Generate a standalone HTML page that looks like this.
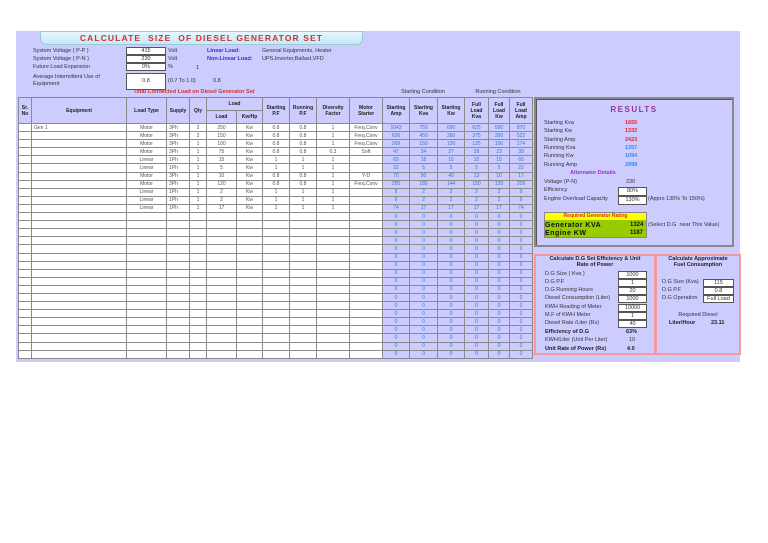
<!DOCTYPE html>
<html><head><meta charset="utf-8"><style>
*{margin:0;padding:0;box-sizing:border-box}
body{width:768px;height:543px;background:#fff;font-family:"Liberation Sans",sans-serif;font-size:5.5px;color:#333;position:relative;overflow:hidden}
.bg{position:absolute;left:16px;top:31px;width:724px;height:331px;background:#ccccff}
.a{position:absolute;white-space:nowrap;line-height:1}
.title{position:absolute;left:40px;top:31px;width:323px;height:14px;border-radius:0 0 6px 6px;background:linear-gradient(#e6f7ff,#c4e8f8);border:1px solid #9cc;color:#c33;font-weight:bold;font-size:8.5px;letter-spacing:1.1px;text-align:center;line-height:13px}
.box{position:absolute;background:#fff;border:1px solid #555;text-align:center;font-size:5.5px;line-height:6px}
table{position:absolute;left:18px;top:97px;border-collapse:collapse;table-layout:fixed}
td,th{border:1px solid #8a8a8a;height:8.1px;padding:0;font-size:5px;line-height:6px;text-align:center;color:#555;white-space:nowrap;overflow:hidden;background:#fff}
th{background:#ccccff;color:#222;font-weight:bold;height:13px}
td.s{background:#ccccff;color:#37c}
td.l{text-align:left;padding-left:2px}
.res{position:absolute;left:534px;top:97px;width:200px;height:150px;border:2px solid #888;box-shadow:inset 1px 1px 0 #555}
.pk{position:absolute;top:254px;height:101px;border:2px solid #f59a9a}
b{color:#222}
</style></head><body>
<div class="bg"></div>
<div class="title">CALCULATE &nbsp;SIZE &nbsp;OF DIESEL GENERATOR SET</div>

<div class="a" style="left:33px;top:49px">System Voltage ( P-P )</div>
<div class="a" style="left:33px;top:57px">System Voltage ( P-N )</div>
<div class="a" style="left:33px;top:65px">Future Load Expansion</div>
<div class="a" style="left:33px;top:75px">Average Intermittent Use of</div>
<div class="a" style="left:33px;top:82px">Equipment</div>
<div class="box" style="left:126px;top:47px;width:40px;height:8px">415</div>
<div class="box" style="left:126px;top:55px;width:40px;height:8px">230</div>
<div class="box" style="left:126px;top:63px;width:40px;height:8px">0%</div>
<div class="box" style="left:126px;top:73px;width:40px;height:17px;line-height:15px">0.8</div>
<div class="a" style="left:168px;top:49px">Volt</div>
<div class="a" style="left:168px;top:57px">Volt</div>
<div class="a" style="left:168px;top:65px">%</div>
<div class="a" style="left:196px;top:66px">1</div>
<div class="a" style="left:168px;top:79px">(0.7 To 1.0)</div>
<div class="a" style="left:213px;top:79px">0.8</div>
<div class="a" style="left:207px;top:49px;color:#33c;font-weight:bold">Linear Load:</div>
<div class="a" style="left:207px;top:57px;color:#33c;font-weight:bold">Non-Linear Load:</div>
<div class="a" style="left:262px;top:49px">General Equipments, Heater</div>
<div class="a" style="left:262px;top:57px">UPS,Inverter,Ballast,VFD</div>
<div class="a" style="left:126px;top:90px;width:136px;text-align:center;color:#c33;font-weight:bold">Total Connected Load on Diesel Generator Set</div>
<div class="a" style="left:382px;top:90px;width:82px;text-align:center">Starting Condition</div>
<div class="a" style="left:464px;top:90px;width:68px;text-align:center">Running Condition</div>

<table>
<colgroup><col style="width:13px"><col style="width:95px"><col style="width:40px"><col style="width:23px"><col style="width:17px"><col style="width:30px"><col style="width:26px"><col style="width:27px"><col style="width:27px"><col style="width:33px"><col style="width:33px"><col style="width:27px"><col style="width:28px"><col style="width:27px"><col style="width:24px"><col style="width:21px"><col style="width:23px"></colgroup>
<tr><th rowspan="2">Sr.<br>No</th><th rowspan="2">Equipment</th><th rowspan="2">Load Type</th><th rowspan="2">Supply</th><th rowspan="2">Qty</th><th colspan="2">Load</th><th rowspan="2">Starting<br>P.F</th><th rowspan="2">Running<br>P.F</th><th rowspan="2">Diversity<br>Factor</th><th rowspan="2">Motor<br>Starter</th><th rowspan="2">Starting<br>Amp</th><th rowspan="2">Starting<br>Kva</th><th rowspan="2">Starting<br>Kw</th><th rowspan="2">Full<br>Load<br>Kva</th><th rowspan="2">Full<br>Load<br>Kw</th><th rowspan="2">Full<br>Load<br>Amp</th></tr>
<tr><th>Load</th><th>Kw/Hp</th></tr>
<tr><td></td><td class="l">Gen 1</td><td>Motor</td><td class="l">3Ph</td><td>2</td><td>250</td><td>Kw</td><td>0.8</td><td>0.8</td><td>1</td><td>Freq.Conv</td><td class="s">1043</td><td class="s">750</td><td class="s">600</td><td class="s">625</td><td class="s">500</td><td class="s">870</td></tr>
<tr><td></td><td></td><td>Motor</td><td class="l">3Ph</td><td>2</td><td>150</td><td>Kw</td><td>0.8</td><td>0.8</td><td>1</td><td>Freq.Conv</td><td class="s">626</td><td class="s">450</td><td class="s">360</td><td class="s">375</td><td class="s">300</td><td class="s">522</td></tr>
<tr><td></td><td></td><td>Motor</td><td class="l">3Ph</td><td>1</td><td>100</td><td>Kw</td><td>0.8</td><td>0.8</td><td>1</td><td>Freq.Conv</td><td class="s">209</td><td class="s">150</td><td class="s">120</td><td class="s">125</td><td class="s">100</td><td class="s">174</td></tr>
<tr><td></td><td></td><td>Motor</td><td class="l">3Ph</td><td>1</td><td>75</td><td>Kw</td><td>0.8</td><td>0.8</td><td>0.3</td><td>Soft</td><td class="s">47</td><td class="s">34</td><td class="s">27</td><td class="s">28</td><td class="s">23</td><td class="s">39</td></tr>
<tr><td></td><td></td><td>Linear</td><td class="l">1Ph</td><td>1</td><td>15</td><td>Kw</td><td>1</td><td>1</td><td>1</td><td></td><td class="s">65</td><td class="s">15</td><td class="s">15</td><td class="s">15</td><td class="s">15</td><td class="s">65</td></tr>
<tr><td></td><td></td><td>Linear</td><td class="l">1Ph</td><td>1</td><td>5</td><td>Kw</td><td>1</td><td>1</td><td>1</td><td></td><td class="s">22</td><td class="s">5</td><td class="s">5</td><td class="s">5</td><td class="s">5</td><td class="s">22</td></tr>
<tr><td></td><td></td><td>Motor</td><td class="l">3Ph</td><td>1</td><td>10</td><td>Kw</td><td>0.8</td><td>0.8</td><td>1</td><td>Y-D</td><td class="s">70</td><td class="s">50</td><td class="s">40</td><td class="s">13</td><td class="s">10</td><td class="s">17</td></tr>
<tr><td></td><td></td><td>Motor</td><td class="l">3Ph</td><td>1</td><td>120</td><td>Kw</td><td>0.8</td><td>0.8</td><td>1</td><td>Freq.Conv</td><td class="s">250</td><td class="s">180</td><td class="s">144</td><td class="s">150</td><td class="s">120</td><td class="s">209</td></tr>
<tr><td></td><td></td><td>Linear</td><td class="l">1Ph</td><td>1</td><td>2</td><td>Kw</td><td>1</td><td>1</td><td>1</td><td></td><td class="s">9</td><td class="s">2</td><td class="s">2</td><td class="s">2</td><td class="s">2</td><td class="s">9</td></tr>
<tr><td></td><td></td><td>Linear</td><td class="l">1Ph</td><td>1</td><td>2</td><td>Kw</td><td>1</td><td>1</td><td>1</td><td></td><td class="s">9</td><td class="s">2</td><td class="s">2</td><td class="s">2</td><td class="s">2</td><td class="s">9</td></tr>
<tr><td></td><td></td><td>Linear</td><td class="l">1Ph</td><td>1</td><td>17</td><td>Kw</td><td>1</td><td>1</td><td>1</td><td></td><td class="s">74</td><td class="s">17</td><td class="s">17</td><td class="s">17</td><td class="s">17</td><td class="s">74</td></tr>
<tr><td></td><td></td><td></td><td></td><td></td><td></td><td></td><td></td><td></td><td></td><td></td><td class="s">0</td><td class="s">0</td><td class="s">0</td><td class="s">0</td><td class="s">0</td><td class="s">0</td></tr>
<tr><td></td><td></td><td></td><td></td><td></td><td></td><td></td><td></td><td></td><td></td><td></td><td class="s">0</td><td class="s">0</td><td class="s">0</td><td class="s">0</td><td class="s">0</td><td class="s">0</td></tr>
<tr><td></td><td></td><td></td><td></td><td></td><td></td><td></td><td></td><td></td><td></td><td></td><td class="s">0</td><td class="s">0</td><td class="s">0</td><td class="s">0</td><td class="s">0</td><td class="s">0</td></tr>
<tr><td></td><td></td><td></td><td></td><td></td><td></td><td></td><td></td><td></td><td></td><td></td><td class="s">0</td><td class="s">0</td><td class="s">0</td><td class="s">0</td><td class="s">0</td><td class="s">0</td></tr>
<tr><td></td><td></td><td></td><td></td><td></td><td></td><td></td><td></td><td></td><td></td><td></td><td class="s">0</td><td class="s">0</td><td class="s">0</td><td class="s">0</td><td class="s">0</td><td class="s">0</td></tr>
<tr><td></td><td></td><td></td><td></td><td></td><td></td><td></td><td></td><td></td><td></td><td></td><td class="s">0</td><td class="s">0</td><td class="s">0</td><td class="s">0</td><td class="s">0</td><td class="s">0</td></tr>
<tr><td></td><td></td><td></td><td></td><td></td><td></td><td></td><td></td><td></td><td></td><td></td><td class="s">0</td><td class="s">0</td><td class="s">0</td><td class="s">0</td><td class="s">0</td><td class="s">0</td></tr>
<tr><td></td><td></td><td></td><td></td><td></td><td></td><td></td><td></td><td></td><td></td><td></td><td class="s">0</td><td class="s">0</td><td class="s">0</td><td class="s">0</td><td class="s">0</td><td class="s">0</td></tr>
<tr><td></td><td></td><td></td><td></td><td></td><td></td><td></td><td></td><td></td><td></td><td></td><td class="s">0</td><td class="s">0</td><td class="s">0</td><td class="s">0</td><td class="s">0</td><td class="s">0</td></tr>
<tr><td></td><td></td><td></td><td></td><td></td><td></td><td></td><td></td><td></td><td></td><td></td><td class="s">0</td><td class="s">0</td><td class="s">0</td><td class="s">0</td><td class="s">0</td><td class="s">0</td></tr>
<tr><td></td><td></td><td></td><td></td><td></td><td></td><td></td><td></td><td></td><td></td><td></td><td class="s">0</td><td class="s">0</td><td class="s">0</td><td class="s">0</td><td class="s">0</td><td class="s">0</td></tr>
<tr><td></td><td></td><td></td><td></td><td></td><td></td><td></td><td></td><td></td><td></td><td></td><td class="s">0</td><td class="s">0</td><td class="s">0</td><td class="s">0</td><td class="s">0</td><td class="s">0</td></tr>
<tr><td></td><td></td><td></td><td></td><td></td><td></td><td></td><td></td><td></td><td></td><td></td><td class="s">0</td><td class="s">0</td><td class="s">0</td><td class="s">0</td><td class="s">0</td><td class="s">0</td></tr>
<tr><td></td><td></td><td></td><td></td><td></td><td></td><td></td><td></td><td></td><td></td><td></td><td class="s">0</td><td class="s">0</td><td class="s">0</td><td class="s">0</td><td class="s">0</td><td class="s">0</td></tr>
<tr><td></td><td></td><td></td><td></td><td></td><td></td><td></td><td></td><td></td><td></td><td></td><td class="s">0</td><td class="s">0</td><td class="s">0</td><td class="s">0</td><td class="s">0</td><td class="s">0</td></tr>
<tr><td></td><td></td><td></td><td></td><td></td><td></td><td></td><td></td><td></td><td></td><td></td><td class="s">0</td><td class="s">0</td><td class="s">0</td><td class="s">0</td><td class="s">0</td><td class="s">0</td></tr>
<tr><td></td><td></td><td></td><td></td><td></td><td></td><td></td><td></td><td></td><td></td><td></td><td class="s">0</td><td class="s">0</td><td class="s">0</td><td class="s">0</td><td class="s">0</td><td class="s">0</td></tr>
<tr><td></td><td></td><td></td><td></td><td></td><td></td><td></td><td></td><td></td><td></td><td></td><td class="s">0</td><td class="s">0</td><td class="s">0</td><td class="s">0</td><td class="s">0</td><td class="s">0</td></tr>
</table>

<div class="res"></div>
<div class="a" style="left:534px;top:106px;width:200px;text-align:center;color:#939;font-weight:bold;font-size:8px;letter-spacing:1.5px">RESULTS</div>
<div class="a" style="left:544px;top:121px">Starting Kva</div><div class="a" style="left:625px;top:121px;color:#e23;font-weight:bold">1655</div>
<div class="a" style="left:544px;top:129px">Starting Kw</div><div class="a" style="left:625px;top:129px;color:#e23;font-weight:bold">1332</div>
<div class="a" style="left:544px;top:138px">Starting Amp</div><div class="a" style="left:625px;top:138px;color:#e23;font-weight:bold">2423</div>
<div class="a" style="left:544px;top:146px">Running Kva</div><div class="a" style="left:625px;top:146px;color:#38e;font-weight:bold">1357</div>
<div class="a" style="left:544px;top:154px">Running Kw</div><div class="a" style="left:625px;top:154px;color:#38e;font-weight:bold">1094</div>
<div class="a" style="left:544px;top:163px">Running Amp</div><div class="a" style="left:625px;top:163px;color:#38e;font-weight:bold">2999</div>
<div class="a" style="left:570px;top:171px;color:#93c;font-weight:bold">Alternator Details</div>
<div class="a" style="left:544px;top:180px">Voltage (P-N)</div><div class="a" style="left:626px;top:180px">230</div>
<div class="a" style="left:544px;top:188px">Efficiency</div><div class="box" style="left:618px;top:187px;width:29px;height:9px">80%</div>
<div class="a" style="left:544px;top:197px">Engine Overload Capacity</div><div class="box" style="left:618px;top:196px;width:29px;height:9px">130%</div>
<div class="a" style="left:648px;top:197px">(Appro 130% To 150%)</div>
<div style="position:absolute;left:544px;top:212px;width:103px;height:26px;border:1px solid #888;background:#9c0"></div>
<div style="position:absolute;left:545px;top:213px;width:101px;height:7px;background:#ff0;color:#c33;font-weight:bold;text-align:center;line-height:7px;font-size:5px">Required Generator Rating</div>
<div class="a" style="left:545px;top:222px;font-weight:bold;font-size:7px;color:#111;letter-spacing:.5px">Generator KVA</div><div class="a" style="left:630px;top:222px;font-weight:bold;font-size:6px;color:#111">1324</div>
<div class="a" style="left:545px;top:230px;font-weight:bold;font-size:7px;color:#111;letter-spacing:.5px">Engine KW</div><div class="a" style="left:630px;top:230px;font-weight:bold;font-size:6px;color:#111">1187</div>
<div class="a" style="left:648px;top:223px">(Select D.G &nbsp;near This Value)</div>

<div class="pk" style="left:534px;width:122px"></div>
<div class="pk" style="left:655px;width:86px"></div>
<div class="a" style="left:534px;top:257px;width:122px;text-align:center;font-weight:bold;color:#222">Calculate D.G Set Efficiency &amp; Unit</div>
<div class="a" style="left:534px;top:263px;width:122px;text-align:center;font-weight:bold;color:#222">Rate of Power</div>
<div class="a" style="left:656px;top:257px;width:84px;text-align:center;font-weight:bold;color:#222">Calculate Approximate</div>
<div class="a" style="left:656px;top:263px;width:84px;text-align:center;font-weight:bold;color:#222">Fuel Consumption</div>
<div class="a" style="left:545px;top:272px">D.G Size ( Kva )</div><div class="box" style="left:618px;top:271px;width:29px;height:8px">1000</div>
<div class="a" style="left:545px;top:280px">D.G P.F</div><div class="box" style="left:618px;top:279px;width:29px;height:8px">1</div>
<div class="a" style="left:545px;top:288px">D.G Running Hours</div><div class="box" style="left:618px;top:287px;width:29px;height:8px">20</div>
<div class="a" style="left:545px;top:296px">Diesel Consumption (Liter)</div><div class="box" style="left:618px;top:295px;width:29px;height:8px">1000</div>
<div class="a" style="left:545px;top:305px">KWH Reading of Meter</div><div class="box" style="left:618px;top:304px;width:29px;height:8px">10000</div>
<div class="a" style="left:545px;top:313px">M.F of KWH Meter</div><div class="box" style="left:618px;top:312px;width:29px;height:8px">1</div>
<div class="a" style="left:545px;top:321px">Diesel Rate /Liter (Rs)</div><div class="box" style="left:618px;top:320px;width:29px;height:8px">40</div>
<div class="a" style="left:545px;top:330px;font-weight:bold;color:#222">Efficiency of D.G</div><div class="a" style="left:626px;top:330px;font-weight:bold;color:#222">63%</div>
<div class="a" style="left:545px;top:338px">KWH/Liter (Unit Per Liter)</div><div class="a" style="left:629px;top:338px">10</div>
<div class="a" style="left:545px;top:347px;font-weight:bold;color:#222">Unit Rate of Power (Rs)</div><div class="a" style="left:627px;top:347px;font-weight:bold;color:#222">4.0</div>
<div class="a" style="left:662px;top:280px">D.G Size (Kva)</div><div class="box" style="left:703px;top:279px;width:31px;height:8px">115</div>
<div class="a" style="left:662px;top:288px">D.G P.F</div><div class="box" style="left:703px;top:287px;width:31px;height:8px">0.8</div>
<div class="a" style="left:662px;top:296px">D.G Operation</div><div class="box" style="left:703px;top:295px;width:31px;height:8px">Full Load</div>
<div class="a" style="left:656px;top:313px;width:84px;text-align:center">Required Diesel</div>
<div class="a" style="left:669px;top:321px;font-weight:bold;color:#222">Liter/Hour</div><div class="a" style="left:711px;top:321px;font-weight:bold;color:#222">23.11</div>
</body></html>
